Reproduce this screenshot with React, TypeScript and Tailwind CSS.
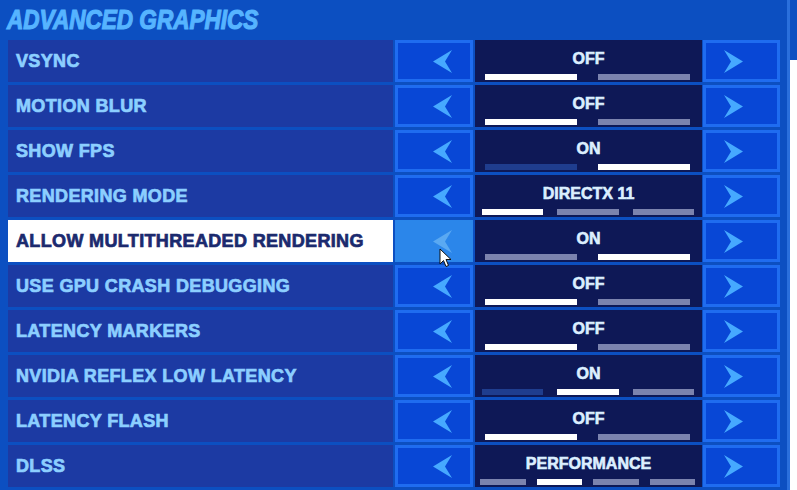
import React from 'react';

type Bar = 'on' | 'off' | 'dim';

const rows: { label: string; value: string; bars: Bar[]; selected?: boolean }[] = [
  { label: 'VSYNC', value: 'OFF', bars: ['on', 'off'] },
  { label: 'MOTION BLUR', value: 'OFF', bars: ['on', 'off'] },
  { label: 'SHOW FPS', value: 'ON', bars: ['dim', 'on'] },
  { label: 'RENDERING MODE', value: 'DIRECTX 11', bars: ['on', 'off', 'off'] },
  { label: 'ALLOW MULTITHREADED RENDERING', value: 'ON', bars: ['off', 'on'], selected: true },
  { label: 'USE GPU CRASH DEBUGGING', value: 'OFF', bars: ['on', 'off'] },
  { label: 'LATENCY MARKERS', value: 'OFF', bars: ['on', 'off'] },
  { label: 'NVIDIA REFLEX LOW LATENCY', value: 'ON', bars: ['dim', 'on', 'off'] },
  { label: 'LATENCY FLASH', value: 'OFF', bars: ['on', 'off'] },
  { label: 'DLSS', value: 'PERFORMANCE', bars: ['off', 'on', 'off', 'off'] },
];

const barColors: Record<Bar, string> = {
  on: 'bg-white',
  off: 'bg-[#7b83ae]',
  dim: 'bg-[#1f3d8e]',
};

const barLayout: Record<number, string> = {
  2: 'gap-[21px] pl-[10px] pr-[12px]',
  3: 'gap-[14px] pl-[7px] pr-[8px]',
  4: 'gap-[11px] pl-[5px] pr-[7px]',
};

function Arrow({ dir, faded }: { dir: 'left' | 'right'; faded?: boolean }) {
  return (
    <svg width="19" height="23" viewBox="0 0 19 23" className={dir === 'right' ? 'scale-x-[-1]' : ''}>
      <polygon points="19,0 0,11.5 19,23 12,11.5" fill={faded ? '#5aa9f2' : '#46a9ff'} />
    </svg>
  );
}

function Cursor() {
  return (
    <svg width="13" height="20" viewBox="0 0 13 20" className="absolute left-[439px] top-[248px]">
      <path d="M1 1 L1 16 L4.5 12.5 L7 18.5 L9.5 17.5 L7 11.5 L12 11.5 Z" fill="#ffffff" stroke="#111111" strokeWidth="1" strokeLinejoin="round" />
    </svg>
  );
}

export default function App() {
  return (
    <div
      className="relative w-[797px] h-[490px] overflow-hidden bg-[#0c4fc1] flex"
      style={{ fontFamily: '"Liberation Sans", Arial, sans-serif' }}
    >
      <div className="w-[790px] border-r-[3px] border-[#2a6fdc]">
        {/* Header */}
        <div className="h-[40px] flex items-center pl-[7px]">
          <h1 className="text-[27px] leading-none font-bold italic text-[#56b4ff] scale-x-[0.835] origin-left whitespace-nowrap [-webkit-text-stroke:1.2px_#56b4ff]">
            ADVANCED GRAPHICS
          </h1>
        </div>

        {/* Settings rows */}
        <div className="flex flex-col gap-[3px] pl-[8px]">
          {rows.map((row) => (
            <div key={row.label} className="flex h-[42px]">
              <div
                className={`w-[385px] flex items-center pl-[8px] text-[18px] font-bold tracking-[0.35px] [-webkit-text-stroke:0.7px_currentColor] ${
                  row.selected ? 'bg-white text-[#1b2a6e]' : 'bg-[#1c3aa3] text-[#8ccfff]'
                }`}
              >
                {row.label}
              </div>
              <button
                className={`ml-[2px] w-[78px] flex items-center justify-center pl-[16px] border-[3px] ${
                  row.selected ? 'bg-[#2b86ea] border-[#2b86ea]' : 'bg-[#0847d6] border-[#1f6cf0]'
                }`}
              >
                <Arrow dir="left" faded={row.selected} />
              </button>
              <div className="ml-[2px] w-[227px] bg-[#0e1856] flex flex-col">
                <div className="pt-[11px] text-center text-[16px] leading-4 font-bold text-[#dcefff] [-webkit-text-stroke:0.6px_#dcefff]">
                  {row.value}
                </div>
                <div className={`mt-auto mb-[2px] flex ${barLayout[row.bars.length]}`}>
                  {row.bars.map((b, i) => (
                    <div key={i} className={`flex-1 h-[6px] ${barColors[b]}`} />
                  ))}
                </div>
              </div>
              <button className="ml-[1px] w-[77px] flex items-center justify-center pr-[16px] border-[3px] bg-[#0847d6] border-[#1f6cf0]">
                <Arrow dir="right" />
              </button>
            </div>
          ))}
        </div>
      </div>
      <div className="flex-1 flex flex-col">
        <div className="h-[60px]" />
        <div className="flex-1 bg-white" />
      </div>
      <Cursor />
    </div>
  );
}
